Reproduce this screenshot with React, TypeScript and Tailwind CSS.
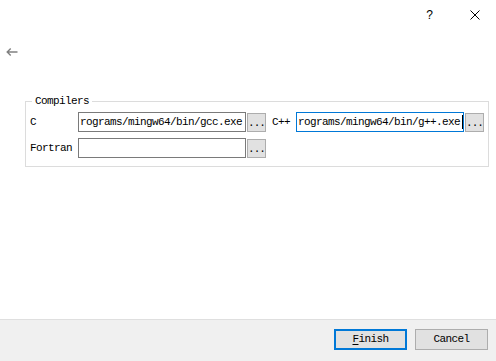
import React from 'react';

const mono = { fontFamily: '"Liberation Mono", "DejaVu Sans Mono", monospace' };

function PathBox({ value, focused }: { value: string; focused?: boolean }) {
  return (
    <div
      className={`relative h-[20px] w-[168px] overflow-hidden whitespace-nowrap border bg-white pl-[1px] text-[11px] leading-[18px] tracking-[-0.6px] text-black ${
        focused ? 'border-[#0078d7]' : 'border-[#7a7a7a]'
      }`}
    >
      {value}
      {focused && <span className="absolute left-[165px] top-[2px] h-[14px] w-[1px] bg-black" />}
    </div>
  );
}

function BrowseButton() {
  return (
    <button className="ml-[1px] h-[19px] w-[19px] border border-[#adadad] bg-[#e1e1e1] text-[11px] leading-[18px] tracking-[-1px] text-black">
      ...
    </button>
  );
}

export default function App() {
  return (
    <div className="flex h-[361px] w-[496px] flex-col bg-white text-black" style={mono}>
      {/* title bar */}
      <div className="flex h-[30px] items-center justify-end">
        <span
          className="mr-[37px] text-[12px] leading-none text-black"
          style={{ fontFamily: '"Liberation Sans", Arial, sans-serif' }}
        >
          ?
        </span>
        <svg width="10" height="10" viewBox="0 0 10 10" className="mr-[16px]">
          <path d="M0.5 0.5 L9.5 9.5 M9.5 0.5 L0.5 9.5" stroke="#000" strokeWidth="1" fill="none" />
        </svg>
      </div>

      {/* back */}
      <div className="mt-[18px] flex h-[8px] items-center pl-[6px]">
        <svg width="12" height="8" viewBox="0 0 12 8">
          <path d="M11.5 4 H1.2 M4.7 0.6 L1.2 4 L4.7 7.4" stroke="#808080" strokeWidth="1.4" fill="none" />
        </svg>
      </div>

      <fieldset className="ml-[25px] mt-[38px] w-[464px] border border-[#dcdcdc] px-0 pb-[8px] pt-[4px]">
        <legend className="ml-[6px] px-[3px] text-[11px] leading-[14px] tracking-[-0.6px]">Compilers</legend>
        <div className="flex flex-col gap-[6px] pl-[4px]">
          <div className="flex items-center">
            <span className="w-[48px] text-[11px] tracking-[-0.6px]">C</span>
            <PathBox value="rograms/mingw64/bin/gcc.exe" />
            <BrowseButton />
            <span className="ml-[6px] w-[24px] text-[11px] tracking-[-0.6px]">C++</span>
            <PathBox value="rograms/mingw64/bin/g++.exe" focused />
            <BrowseButton />
          </div>
          <div className="flex items-center">
            <span className="w-[48px] text-[11px] tracking-[-0.6px]">Fortran</span>
            <PathBox value="" />
            <BrowseButton />
          </div>
        </div>
      </fieldset>

      {/* footer */}
      <div className="mt-auto flex h-[42px] items-start justify-end gap-[8px] border-t border-[#dfdfdf] bg-[#f0f0f0] pr-[8px] pt-[9px]">
        <button className="h-[21px] w-[73px] border-2 border-[#0078d7] bg-[#e1e1e1] text-[11px] leading-[17px] tracking-[-0.6px] text-black">
          <span className="underline underline-offset-2">F</span>inish
        </button>
        <button className="h-[21px] w-[73px] border border-[#adadad] bg-[#e1e1e1] text-[11px] leading-[19px] tracking-[-0.6px] text-black">
          Cancel
        </button>
      </div>
    </div>
  );
}
